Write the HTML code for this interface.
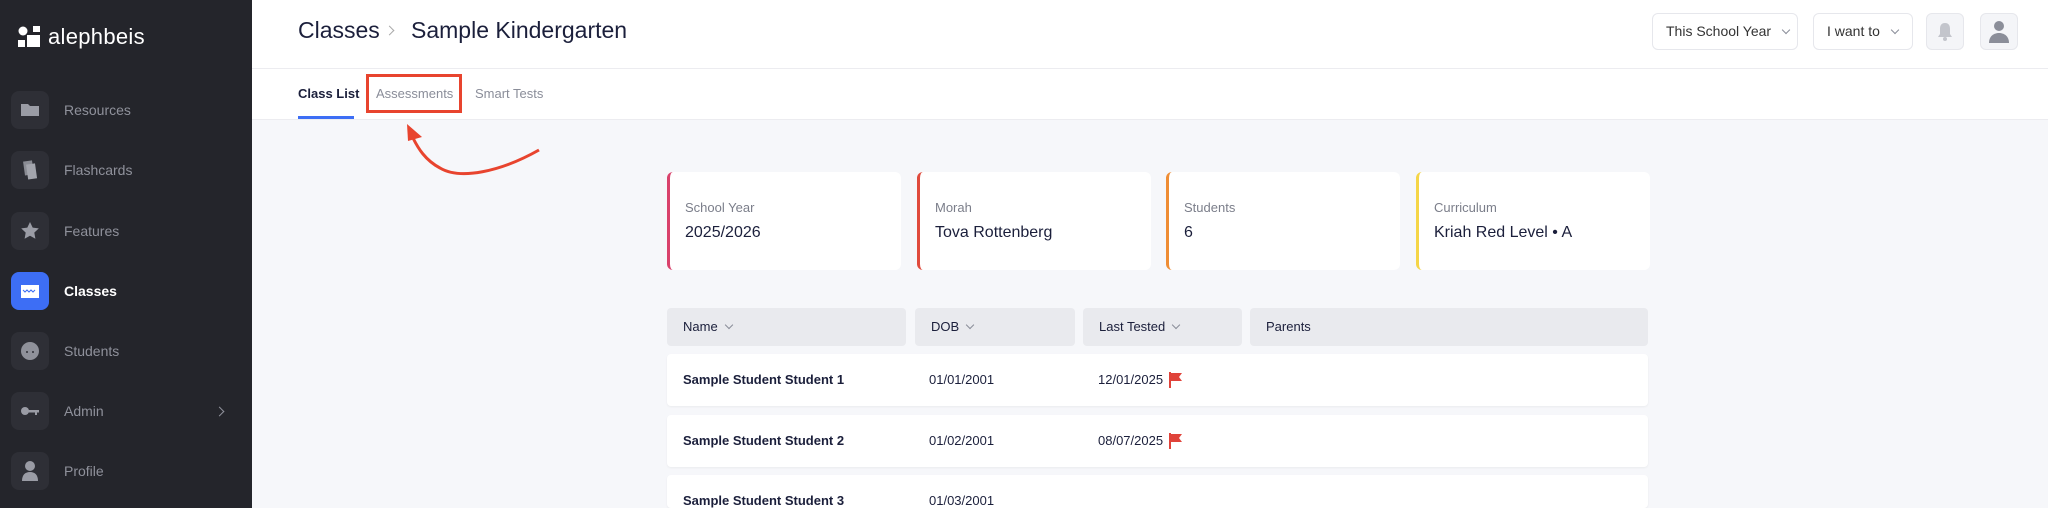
<!DOCTYPE html>
<html style="width:2048px;height:508px;overflow:hidden"><head><meta charset="utf-8"><style>
*{margin:0;padding:0;box-sizing:border-box}
body{width:2048px;height:508px;overflow:hidden;font-family:"Liberation Sans",sans-serif;background:#f6f7fa;position:relative}
.sb{position:absolute;left:0;top:0;width:252px;height:508px;background:#24252b}
.nav{position:absolute;left:11px;width:38px;height:38px;border-radius:8px;background:#2e2f36}
.nl{position:absolute;left:64px;font-size:14px;color:#8f919b}
.hd{position:absolute;left:252px;top:0;right:0;height:119px;background:#fff}
.a{position:absolute}
.btn{position:absolute;top:13px;height:37px;border:1px solid #e6e7ec;border-radius:6px;background:#fff;font-size:14px;color:#333;padding-left:13px;line-height:35px}
.card{position:absolute;top:172px;height:98px;width:234px;background:#fff;border-radius:6px;border-left:3px solid}
.card .l{position:absolute;left:15px;top:28px;font-size:13px;color:#7b7e8a}
.card .v{position:absolute;left:15px;top:52px;font-size:16px;color:#1b1f3b}
.th{position:absolute;top:308px;height:38px;background:#e9eaee;border-radius:4px;font-size:13px;color:#1b1f3b;line-height:38px;padding-left:16px}
.row{position:absolute;left:667px;width:981px;background:#fff;border-radius:4px;box-shadow:0 1px 2px rgba(0,0,0,.05);font-size:13px;color:#1b1f3b}
.row span{position:absolute;top:0;line-height:52px}
.ch{display:inline-block;width:6px;height:6px;border-right:1.3px solid #8a8d99;border-bottom:1.3px solid #8a8d99;transform:rotate(45deg);margin-left:8px;vertical-align:3px}
</style></head><body>
<div class="sb">
 <svg class="a" style="left:18px;top:26px" width="23" height="22" viewBox="0 0 23 22"><circle cx="5" cy="5" r="4.5" fill="#fff"/><rect x="15" y="0" width="7" height="6" fill="#fff"/><rect x="0" y="14" width="7" height="7" fill="#fff"/><rect x="9" y="9" width="13" height="12" fill="#fff"/></svg>
 <div class="a" style="left:48px;top:24px;font-size:22px;color:#fff;letter-spacing:.3px">alephbeis</div>
 <div class="nav" style="top:91px"><svg width="38" height="38"><path d="M10 13h7l2 2h9v10H10z" fill="#9a9ca5"/></svg></div><div class="nl" style="top:102px">Resources</div>
 <div class="nav" style="top:151px"><svg width="38" height="38"><rect x="13" y="10" width="9" height="14" fill="#8a8c94" transform="rotate(-8 17 17)"/><rect x="16" y="13" width="9" height="15" fill="#a3a5ad" transform="rotate(-8 20 20)"/></svg></div><div class="nl" style="top:162px">Flashcards</div>
 <div class="nav" style="top:212px"><svg width="38" height="38"><path d="M19 10l2.7 5.6 6.1.8-4.5 4.2 1.1 6.1L19 23.8 13.6 26.7l1.1-6.1-4.5-4.2 6.1-.8z" fill="#9a9ca5"/></svg></div><div class="nl" style="top:223px">Features</div>
 <div class="nav" style="top:272px;background:#3d6ef5"><svg width="38" height="38"><rect x="10" y="13" width="18" height="13" fill="#fff"/><path d="M12 18l2 2 2-2 2 2 2-2 2 2 2-2" stroke="#3d6ef5" fill="none"/></svg></div><div class="nl" style="top:283px;color:#fff;font-weight:bold">Classes</div>
 <div class="nav" style="top:332px"><svg width="38" height="38"><circle cx="19" cy="19" r="9" fill="#8f919a"/><circle cx="16" cy="20" r="1" fill="#2e2f36"/><circle cx="22" cy="20" r="1" fill="#2e2f36"/></svg></div><div class="nl" style="top:343px">Students</div>
 <div class="nav" style="top:392px"><svg width="38" height="38"><circle cx="14" cy="19" r="4" fill="#9a9ca5"/><rect x="17" y="18" width="11" height="2.5" fill="#9a9ca5"/><rect x="24" y="19" width="2" height="4" fill="#9a9ca5"/></svg></div><div class="nl" style="top:403px">Admin</div>
 <div class="a" style="left:216px;top:408px;width:7px;height:7px;border-right:1.3px solid #8f919b;border-top:1.3px solid #8f919b;transform:rotate(45deg)"></div>
 <div class="nav" style="top:452px"><svg width="38" height="38"><circle cx="19" cy="14" r="5" fill="#9a9ca5"/><path d="M11 29c0-6 3-9 8-9s8 3 8 9z" fill="#9a9ca5"/></svg></div><div class="nl" style="top:463px">Profile</div>
</div>
<div class="hd">
 <div class="a" style="left:46px;top:17px;font-size:23px;color:#1b1f3b">Classes</div>
 <div class="a" style="left:134px;top:27px;width:7px;height:7px;border-right:1.3px solid #aaa;border-top:1.3px solid #aaa;transform:rotate(45deg)"></div>
 <div class="a" style="left:159px;top:17px;font-size:23px;color:#1b1f3b">Sample Kindergarten</div>
 <div class="a" style="left:0;right:0;top:68px;height:1px;background:#ececf0"></div>
 <div class="a" style="left:46px;top:86px;font-size:13px;font-weight:bold;color:#1b1f3b">Class List</div>
 <div class="a" style="left:46px;top:116px;width:56px;height:3px;background:#3d6ef5"></div>
 <div class="a" style="left:124px;top:86px;font-size:13px;color:#8a8d99">Assessments</div>
 <div class="a" style="left:114px;top:74px;width:96px;height:39px;border:3px solid #e8442e"></div>
 <div class="a" style="left:223px;top:86px;font-size:13px;color:#8a8d99">Smart Tests</div>
 <div class="btn" style="left:1400px;width:146px">This School Year<span class="ch" style="margin-left:12px"></span></div>
 <div class="btn" style="left:1561px;width:100px">I want to<span class="ch" style="margin-left:12px"></span></div>
 <div class="btn" style="left:1674px;width:38px;padding:0;background:#f4f5f8"><svg width="36" height="35"><path d="M18 9c-4 0-5 3-5 6v5l-2 3h14l-2-3v-5c0-3-1-6-5-6z" fill="#c3c5cc"/><circle cx="18" cy="25" r="2" fill="#c3c5cc"/></svg></div>
 <div class="btn" style="left:1728px;width:38px;padding:0;background:#f4f5f8"><svg width="36" height="35"><circle cx="18" cy="12" r="5" fill="#8b8e99"/><path d="M8 29c0-7 5-10 10-10s10 3 10 10z" fill="#8b8e99"/></svg></div>
</div>
<div class="a" style="left:252px;right:0;top:119px;height:1px;background:#ececf0"></div>
<svg class="a" style="left:0;top:0" width="600" height="200"><path d="M539 150C500 172 460 180 440 168C425 160 418 148 413 138" stroke="#e8442e" stroke-width="3" fill="none"/><path d="M407 124l15 13-14 4z" fill="#e8442e"/></svg>
<div class="card" style="left:667px;border-color:#d9416b"><div class="l">School Year</div><div class="v">2025/2026</div></div>
<div class="card" style="left:917px;border-color:#e04a3c"><div class="l">Morah</div><div class="v">Tova Rottenberg</div></div>
<div class="card" style="left:1166px;border-color:#ef8d34"><div class="l">Students</div><div class="v">6</div></div>
<div class="card" style="left:1416px;border-color:#f5d547"><div class="l">Curriculum</div><div class="v">Kriah Red Level • A</div></div>
<div class="th" style="left:667px;width:239px">Name<span class="ch"></span></div>
<div class="th" style="left:915px;width:160px">DOB<span class="ch"></span></div>
<div class="th" style="left:1083px;width:159px">Last Tested<span class="ch"></span></div>
<div class="th" style="left:1250px;width:398px">Parents</div>
<div class="row" style="top:354px;height:52px"><span style="left:16px;font-weight:bold">Sample Student Student 1</span><span style="left:262px">01/01/2001</span><span style="left:431px">12/01/2025</span><svg class="a" style="left:502px;top:18px" width="14" height="16"><rect x="0" y="0" width="2" height="16" fill="#e0433a"/><path d="M2 1h11l-3 4 3 4H2z" fill="#e0433a"/></svg></div>
<div class="row" style="top:415px;height:52px"><span style="left:16px;font-weight:bold">Sample Student Student 2</span><span style="left:262px">01/02/2001</span><span style="left:431px">08/07/2025</span><svg class="a" style="left:502px;top:18px" width="14" height="16"><rect x="0" y="0" width="2" height="16" fill="#e0433a"/><path d="M2 1h11l-3 4 3 4H2z" fill="#e0433a"/></svg></div>
<div class="row" style="top:475px;height:33px"><span style="left:16px;font-weight:bold">Sample Student Student 3</span><span style="left:262px">01/03/2001</span></div>
</body></html>
